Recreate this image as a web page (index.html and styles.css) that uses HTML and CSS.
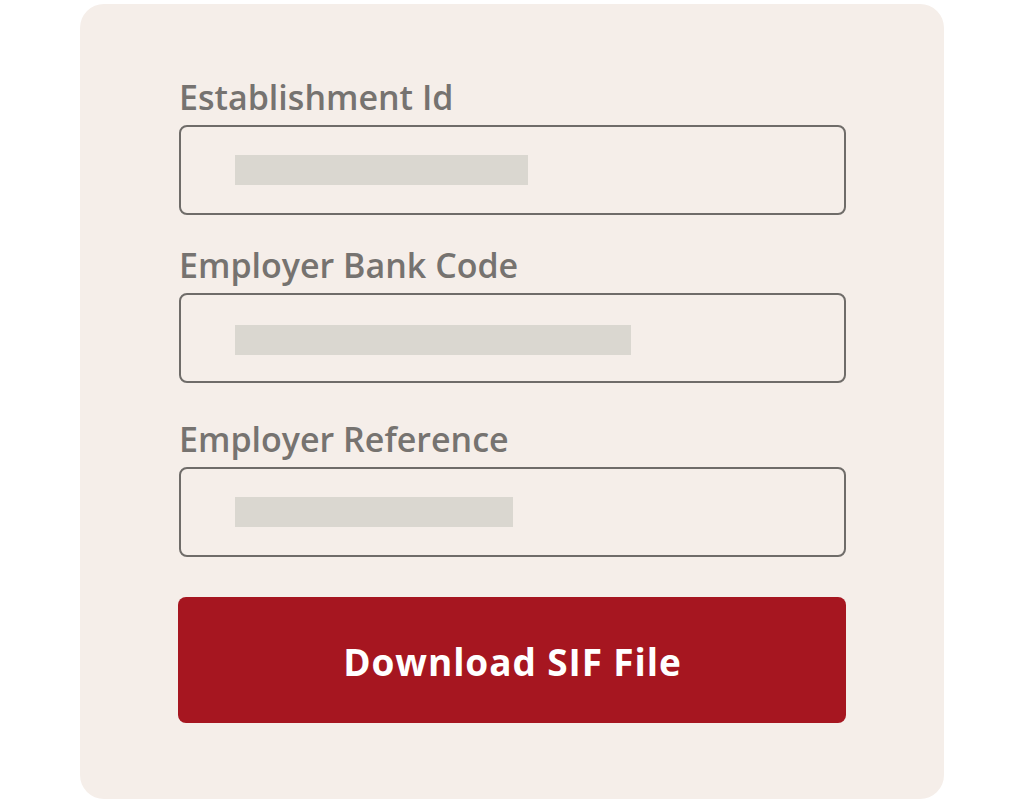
FILE: index.html
```html
<!DOCTYPE html>
<html lang="en">
<head>
    <meta charset="UTF-8">
    <meta name="viewport" content="width=device-width, initial-scale=1.0">
    <title>SIF File</title>
    <link rel="stylesheet" href="styles.css">
</head>
<body>
    <div class="card">
        <div class="field field-first">
            <label class="field-label">Establishment Id</label>
            <div class="field-input"><span class="placeholder" style="width: 293px;"></span></div>
        </div>
        <div class="field">
            <label class="field-label">Employer Bank Code</label>
            <div class="field-input"><span class="placeholder placeholder-low" style="width: 396px;"></span></div>
        </div>
        <div class="field field-last">
            <label class="field-label">Employer Reference</label>
            <div class="field-input"><span class="placeholder" style="width: 278px;"></span></div>
        </div>
        <button class="download-btn">Download SIF File</button>
    </div>
</body>
</html>
```

FILE: styles.css
```css
body {
    margin: 0;
    padding: 0;
    background: #ffffff;
    font-family: 'Open Sans', 'Liberation Sans', sans-serif;
    width: 1024px;
    height: 800px;
    overflow: hidden;
}
.card {
    margin: 4px 0 0 80px;
    width: 864px;
    height: 795px;
    box-sizing: border-box;
    padding: 73px 98px 0 99px;
    background: #f5eee9;
    border-radius: 24px;
    display: flex;
    flex-direction: column;
}
.field {
    display: flex;
    flex-direction: column;
    margin-bottom: 36px;
}
.field-first {
    margin-bottom: 30px;
}
.field-last {
    margin-bottom: 40px;
}
.field-label {
    font-size: 34px;
    font-weight: 600;
    line-height: 40px;
    color: #767370;
    margin-bottom: 8px;
}
.field-input {
    height: 86px;
    border: 2px solid #6f6c69;
    border-radius: 8px;
    display: flex;
    align-items: center;
    padding-left: 54px;
}
.placeholder {
    display: block;
    height: 30px;
    background: #dad7d0;
}
.placeholder-low {
    margin-top: 4px;
}
.download-btn {
    width: 668px;
    margin-left: -1px;
    height: 126px;
    border: none;
    border-radius: 8px;
    background: #a61620;
    color: #ffffff;
    font-family: 'Open Sans', 'Liberation Sans', sans-serif;
    font-size: 37px;
    font-weight: 700;
    letter-spacing: 0.9px;
    padding: 2px 0 0 1px;
    cursor: pointer;
}
```
